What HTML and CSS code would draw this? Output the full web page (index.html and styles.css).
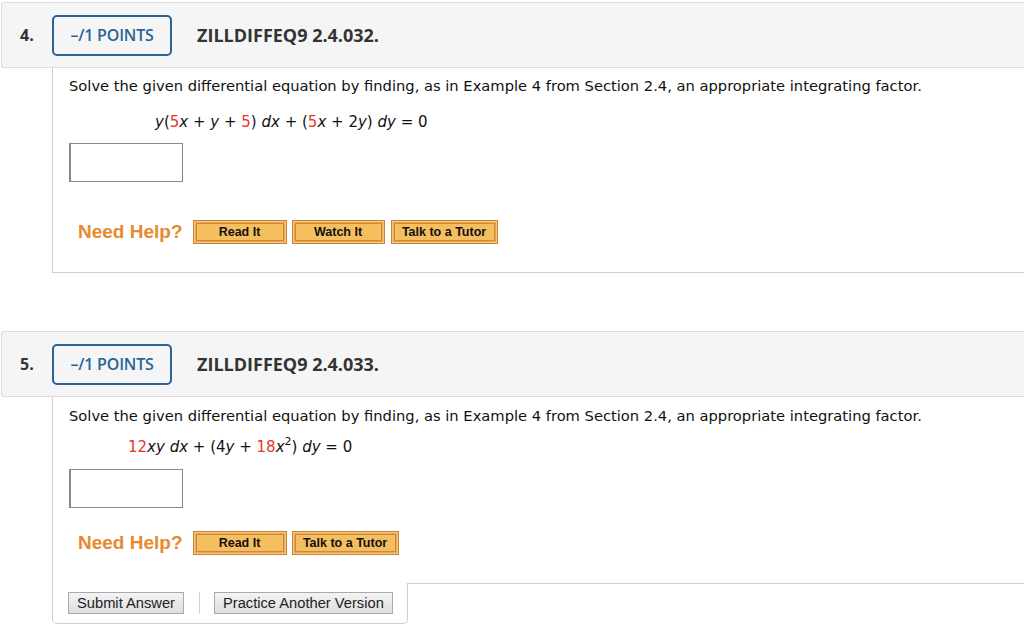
FILE: index.html
```html
<!DOCTYPE html>
<html>
<head>
<meta charset="utf-8">
<link rel="stylesheet" href="styles.css">
</head>
<body>
<div class="page">
  <section class="question q4">
    <div class="qhead">
      <span class="qnum">4.</span>
      <span class="points">–/1 POINTS</span>
      <span class="qid">ZILLDIFFEQ9 2.4.032.</span>
    </div>
    <div class="qbody">
      <p class="prompt">Solve the given differential equation by finding, as in Example 4 from Section 2.4, an appropriate integrating factor.</p>
      <p class="eq eq4"><i>y</i>(<span class="red">5</span><i>x</i> + <i>y</i> + <span class="red">5</span>) <i>dx</i> + (<span class="red">5</span><i>x</i> + 2<i>y</i>) <i>dy</i> = 0</p>
      <div class="answer"></div>
      <div class="help">
        <span class="need">Need Help?</span>
        <span class="hbtn w94">Read It</span>
        <span class="hbtn w93">Watch It</span>
        <span class="hbtn w107">Talk to a Tutor</span>
      </div>
    </div>
  </section>

  <section class="question q5">
    <div class="qhead">
      <span class="qnum">5.</span>
      <span class="points">–/1 POINTS</span>
      <span class="qid">ZILLDIFFEQ9 2.4.033.</span>
    </div>
    <div class="qbody">
      <p class="prompt">Solve the given differential equation by finding, as in Example 4 from Section 2.4, an appropriate integrating factor.</p>
      <p class="eq eq5"><span class="red">12</span><i>xy</i> <i>dx</i> + (4<i>y</i> + <span class="red">18</span><i>x</i><sup>2</sup>) <i>dy</i> = 0</p>
      <div class="answer"></div>
      <div class="help">
        <span class="need">Need Help?</span>
        <span class="hbtn w94">Read It</span>
        <span class="hbtn w107">Talk to a Tutor</span>
      </div>
    </div>
    <div class="footer">
      <div class="actions">
        <span class="gbtn">Submit Answer</span>
        <span class="sep"></span>
        <span class="gbtn">Practice Another Version</span>
      </div>
      <div class="filler"></div>
    </div>
  </section>
</div>
</body>
</html>
```
FILE: styles.css
```css
html, body {
  margin: 0;
  padding: 0;
  background: #fff;
}
.page {
  padding: 2px 0 0 1px;
  font-family: "DejaVu Sans", Verdana, sans-serif;
  color: #222;
}
.question {
  display: flex;
  flex-direction: column;
}
.q5 {
  margin-top: 58px;
}
.qhead {
  height: 64px;
  background: #f5f5f5;
  border: 1px solid #dcdcdc;
  border-right: none;
  border-radius: 3px 0 0 3px;
  display: flex;
  align-items: center;
  font-family: "Open Sans", sans-serif;
  color: #333;
}
.qnum {
  font-weight: 700;
  font-size: 16px;
  width: 50px;
  padding-left: 18px;
  box-sizing: border-box;
}
.points {
  box-sizing: border-box;
  height: 41px;
  width: 120px;
  border: 2px solid #2a6496;
  border-radius: 5px;
  color: #2a6496;
  font-size: 16px;
  font-weight: 600;
  display: flex;
  align-items: center;
  justify-content: center;
  letter-spacing: -0.2px;
}
.qid {
  margin-left: 25px;
  font-weight: 700;
  font-size: 18px;
  color: #333;
}
.qbody {
  margin-left: 51px;
  border-left: 1px solid #cfcfcf;
  padding-left: 16px;
}
.q4 .qbody {
  border-bottom: 1px solid #cfcfcf;
  height: 205px;
  box-sizing: border-box;
}
.q5 .qbody {
  padding-bottom: 28px;
}
.prompt {
  margin: 0;
  font-size: 14.7px;
  line-height: 18px;
  color: #111;
}
.q4 .prompt { padding-top: 9px; }
.q5 .prompt { padding-top: 10px; }
.eq {
  margin: 0;
  font-size: 15px;
  line-height: 18px;
  color: #111;
}
.eq4 { padding-left: 86px; margin-top: 18px; }
.eq5 { padding-left: 59px; margin-top: 13px; }
.eq sup {
  font-size: 11px;
  line-height: 0;
  vertical-align: 7px;
}
.red { color: #e8362a; }
.answer {
  width: 114px;
  height: 39px;
  box-sizing: border-box;
  border: 1px solid #888;
  border-left-width: 2px;
  background: #fff;
}
.q4 .answer { margin-top: 12px; }
.q5 .answer { margin-top: 13px; }
.help {
  display: flex;
  align-items: center;
  height: 24px;
  margin-top: 38px;
  padding-left: 9px;
}
.q5 .help { margin-top: 23px; }
.need {
  font-family: "Liberation Sans", Arial, sans-serif;
  font-weight: 700;
  font-size: 19px;
  color: #e8892e;
  margin-right: 10px;
}
.hbtn {
  box-sizing: border-box;
  height: 24px;
  margin-right: 5px;
  background: #f5bf60;
  border: 1px solid #c9833a;
  display: flex;
  font-family: "Liberation Sans", Arial, sans-serif;
  font-weight: 700;
  font-size: 12.5px;
  color: #111;
  align-items: center;
  justify-content: center;
  box-shadow: inset 0 0 0 1px #f8c77a, inset 0 0 0 2px #f0a54a, inset 0 0 0 3px #c98a45;
}
.w94 { width: 94px; }
.w93 { width: 93px; margin-right: 6px; }
.w107 { width: 107px; }
.footer {
  display: flex;
}
.actions {
  margin-left: 51px;
  width: 356px;
  box-sizing: border-box;
  height: 41px;
  border: 1px solid #cfcfcf;
  border-top: none;
  border-radius: 0 0 5px 5px;
  display: flex;
  align-items: flex-start;
  padding: 9px 0 0 15px;
}
.filler {
  flex: 1;
  border-top: 1px solid #cfcfcf;
}
.gbtn {
  box-sizing: border-box;
  height: 22px;
  border: 1px solid #aaa;
  background: linear-gradient(#f4f4f4, #dedede);
  font-family: "Liberation Sans", Arial, sans-serif;
  font-size: 14.7px;
  color: #222;
  padding: 0 8px;
  display: flex;
  align-items: center;
}
.sep {
  width: 1px;
  height: 22px;
  background: #d0d0d0;
  margin: 0 14px 0 15px;
}
```
